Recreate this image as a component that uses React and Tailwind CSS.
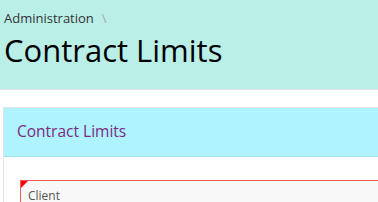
export default function App() {
  return (
    <div className="w-[378px] h-[202px] overflow-hidden bg-white" style={{ fontFamily: '"Open Sans", "Liberation Sans", sans-serif' }}>
      <div className="h-[90px] bg-[#b9efe7] border-b border-[#e6e6e6] px-[4px] pt-[9px]">
        <div className="flex items-center text-[13px] leading-[18px] text-[#333]">
          <span>Administration</span>
          <span className="ml-[8px] text-[#aaa]">\</span>
        </div>
        <h1 className="text-[31px] font-medium leading-[40px] mt-[3px] text-black">Contract Limits</h1>
      </div>
      <div className="pl-[3px] pt-[17px]">
        <div className="border border-[#e3e3e3] border-r-0 bg-white">
          <div className="h-[49px] bg-[#aef3fe] border-b border-[#a4dfe6] flex items-center pl-[13px]">
            <span className="text-[15.5px] font-medium text-[#7b2a7f]">Contract Limits</span>
          </div>
          <div className="pt-[23px] pl-[16px]">
            <div className="relative h-[40px] border border-[#f05a5a] border-r-0 bg-[#f8f8f8] pl-[7px] pt-[1px]">
              <div className="absolute left-0 top-0 w-0 h-0 border-t-[7px] border-t-[#ff0000] border-r-[7px] border-r-transparent" />
              <span className="text-[12px] leading-[14px] text-[#555]">Client</span>
            </div>
          </div>
        </div>
      </div>
    </div>
  );
}
